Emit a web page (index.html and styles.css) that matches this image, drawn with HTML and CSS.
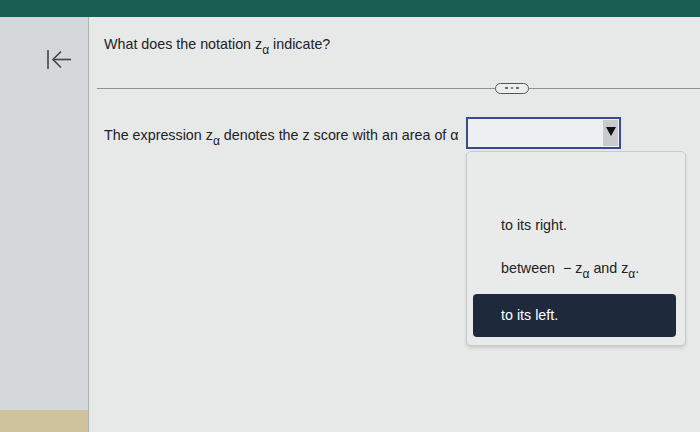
FILE: index.html
```html
<!DOCTYPE html>
<html>
<head>
<meta charset="utf-8">
<link rel="stylesheet" href="styles.css">
</head>
<body>
<div class="topbar"></div>
<div class="layout">
  <aside class="sidebar">
    <div class="back">
      <svg width="28" height="22" viewBox="0 0 28 22">
        <line x1="3" y1="1" x2="3" y2="20" stroke="#444" stroke-width="1.6"/>
        <line x1="8" y1="10.5" x2="26" y2="10.5" stroke="#444" stroke-width="1.6"/>
        <polyline points="16,2.5 8,10.5 16,18.5" fill="none" stroke="#444" stroke-width="1.6"/>
      </svg>
    </div>
    <div class="sidebar-fill"></div>
    <div class="sidebar-foot"></div>
  </aside>
  <main class="main">
    <p class="question">What does the notation z<sub>α</sub> indicate?</p>
    <div class="divider">
      <span class="line"></span>
      <span class="pill"><i></i><i></i><i></i></span>
      <span class="line"></span>
    </div>
    <div class="answer-row">
      <span class="prompt">The expression z<sub>α</sub> denotes the z score with an area of α</span>
      <div class="select-wrap">
        <div class="select"><span class="arrow"><svg width="10" height="9" viewBox="0 0 10 9"><polygon points="0,0 10,0 5,9" fill="#111"/></svg></span></div>
        <div class="menu">
          <div class="opt">to its right.</div>
          <div class="opt">between &nbsp;− z<sub>α</sub> and z<sub>α</sub>.</div>
          <div class="opt selected">to its left.</div>
        </div>
      </div>
    </div>
  </main>
</div>
</body>
</html>
```
FILE: styles.css
```css
html, body {
  margin: 0;
  padding: 0;
  width: 700px;
  height: 432px;
  overflow: hidden;
  font-family: "Liberation Sans", Arial, sans-serif;
  background: #e7e9e9;
  color: #222;
}
.topbar {
  height: 17px;
  background: #1a5d52;
}
.layout {
  display: flex;
  height: 415px;
}
.sidebar {
  width: 88px;
  border-right: 1px solid #aeb2b6;
  background: #d4d8db;
  display: flex;
  flex-direction: column;
}
.back {
  padding: 32px 0 0 45px;
  height: 22px;
}
.back svg { display: block; }
.sidebar-fill { flex: 1; }
.sidebar-foot {
  height: 22px;
  background: #cfc39e;
}
.main {
  flex: 1;
  padding: 0 0 0 15px;
}
.question {
  margin: 18px 0 0 0;
  font-size: 14.3px;
  line-height: 18px;
}
sub {
  font-size: 12px;
  vertical-align: -5px;
  line-height: 0;
}
.divider {
  display: flex;
  align-items: center;
  margin: 29px 0 0 -7px;
  height: 12px;
}
.divider .line {
  flex: 1;
  height: 1px;
  background: #8e9294;
}
.divider .line:first-child { flex: 0 0 398px; }
.pill {
  width: 32px;
  height: 9px;
  border: 1.5px solid #555;
  border-radius: 6px;
  display: flex;
  align-items: center;
  justify-content: center;
  gap: 3px;
  background: #eceeee;
}
.pill i {
  width: 2.5px;
  height: 2.5px;
  border-radius: 50%;
  background: #555;
}
.answer-row {
  display: flex;
  align-items: flex-start;
  margin-top: 24px;
}
.prompt {
  font-size: 14.3px;
  line-height: 18px;
  margin-top: 8px;
  width: 362px;
  white-space: nowrap;
}
.select-wrap {
  display: flex;
  flex-direction: column;
  margin-top: -1px;
}
.select {
  width: 149px;
  height: 26px;
  border: 2px solid #3b4a8c;
  background: #eef0f1;
  display: flex;
  justify-content: flex-end;
  align-items: stretch;
  padding: 1px;
}
.arrow {
  width: 15px;
  background: #c9cacb;
  display: flex;
  align-items: center;
  justify-content: center;
  padding-bottom: 4px;
}
.menu {
  margin-top: 2px;
  width: 203px;
  border: 1px solid #c8cbcd;
  border-radius: 5px;
  background: #e9ebeb;
  box-shadow: 0 2px 3px rgba(0,0,0,0.12);
  padding: 52px 9px 8px 6px;
  display: flex;
  flex-direction: column;
}
.opt {
  font-size: 14.3px;
  line-height: 19px;
  padding: 12px 0 12px 28px;
}
.opt.selected {
  background: #1e2a3c;
  color: #fff;
  border-radius: 4px;
  margin-top: 4px;
}
```
